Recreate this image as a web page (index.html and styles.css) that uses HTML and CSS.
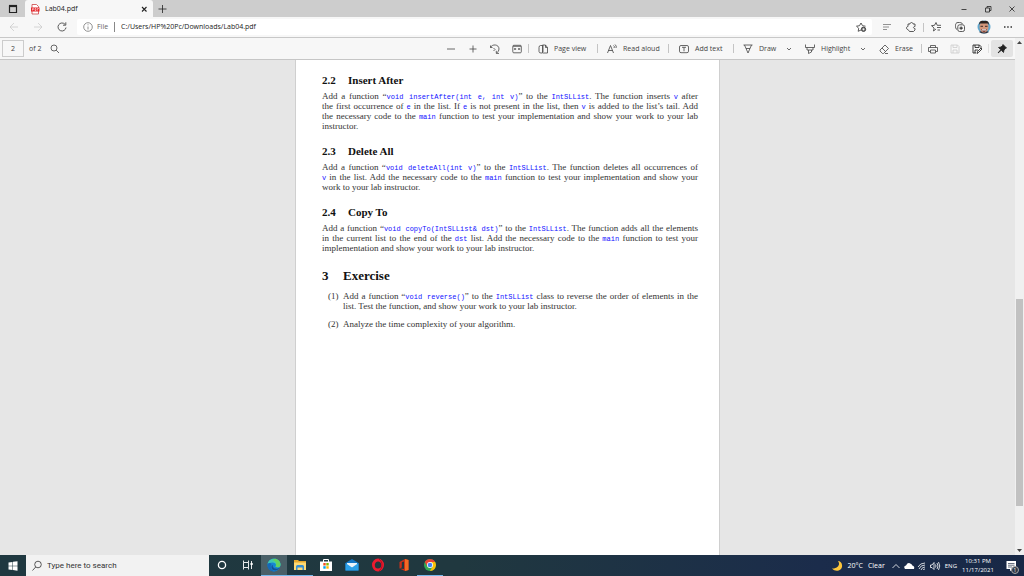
FILE: index.html
```html
<!DOCTYPE html>
<html lang="en">
<head>
<meta charset="utf-8">
<title>Lab04.pdf</title>
<link rel="stylesheet" href="styles.css">
</head>
<body>
<header class="tab-strip">
  <button class="tab-actions" aria-label="Tab actions"><svg class="icon" viewBox="0 0 12 12"><path d="M2.500 3h7v6.500h-7z" stroke-width="1.200"/><path d="M2 3h8" stroke-width="2.200"/></svg></button>
  <div class="tab">
    <svg class="icon" viewBox="0 0 12 12"><path d="M3 1.500h4.500l2 2V11H3z" fill="#fff" stroke="#c44"/><path d="M2 4.500h8.500v4H2z" fill="#e5252a" stroke="none"/><path d="M3.500 7.500v-2h1v1h-1M6 7.500v-2h1v2zM8.500 7.500v-2H10" stroke="#fff" stroke-width=".5"/></svg>
    <span class="tab-title">Lab04.pdf</span>
    <button class="tab-close" aria-label="Close tab"><svg class="icon" viewBox="0 0 12 12"><path d="M4 4l4.500 4.500M8.500 4L4 8.500" stroke-width="1.100"/></svg></button>
  </div>
  <button class="new-tab" aria-label="New tab"><svg class="icon" viewBox="0 0 12 12"><path d="M5.500 2v8M1.500 6h8"/></svg></button>
  <div class="window-controls">
    <button aria-label="Minimize"><svg class="icon" viewBox="0 0 12 12"><path d="M3.500 6.500h5"/></svg></button>
    <button aria-label="Restore"><svg class="icon" viewBox="0 0 12 12"><path d="M3.500 5h4v4h-4zM5 5V3.500h4v4H7.500"/></svg></button>
    <button aria-label="Close"><svg class="icon" viewBox="0 0 12 12"><path d="M3.500 3.500l5 5M8.500 3.500l-5 5"/></svg></button>
  </div>
</header>
<nav class="address-row" aria-label="Navigation">
  <div class="nav-buttons">
    <button class="faded" aria-label="Back"><svg class="icon" viewBox="0 0 12 12"><path d="M10 6H2M6 2L2 6l4 4"/></svg></button>
    <button class="faded" aria-label="Forward"><svg class="icon" viewBox="0 0 12 12"><path d="M2 6h8M6 2l4 4-4 4"/></svg></button>
    <button aria-label="Refresh"><svg class="icon" viewBox="0 0 12 12"><path d="M10 6.500A4 4 0 1 1 9 3.300M9.800 1.300v2.900H7"/></svg></button>
  </div>
  <div class="address">
    <svg class="icon muted" viewBox="0 0 12 12"><circle cx="6" cy="6" r="4.300"/><path d="M6 5.500v3M6 3.300v1"/></svg>
    <span class="scheme">File</span>
    <input class="url" aria-label="Address" value="C:/Users/HP%20Pc/Downloads/Lab04.pdf">
    <button class="favorite" aria-label="Add to favorites"><svg class="icon" viewBox="0 0 12 12"><path d="M6 9l-2.800 1.300.5-3L1.500 5.200l3-.5L6 2l1.500 2.700 3 .5"/><circle cx="8.500" cy="8.300" r="2.200" fill="#777"/><path d="M7.500 8.300h2M8.500 7.300v2" stroke="#fff" stroke-width=".7"/></svg></button>
  </div>
  <div class="browser-actions">
    <button aria-label="Immersive reader"><svg class="icon muted" viewBox="0 0 12 12"><path d="M2 3.500h8M2 6h6M2 8.500h4"/></svg></button>
    <button aria-label="Extensions"><svg class="icon" viewBox="0 0 12 12"><path d="M3 3h2c0-2 3-2 3 0h2v2.500c-2 0-2 2 0 2V9L8.500 10.500H4.500L3 8.500c-2 0-2-3 0-3z"/></svg></button>
    <i class="rule"></i>
    <button aria-label="Favorites"><svg class="icon" viewBox="0 0 12 12"><path d="M6 8L3.500 10l.6-3L1.500 4.700l3-.4L6 1.500l1.200 2.800H11M7 6.500h4M7.500 9H10"/></svg></button>
    <button aria-label="Collections"><svg class="icon" viewBox="0 0 12 12"><path d="M3 8.500C1.500 8 1.500 6 1.500 4.500s.5-3 2.500-3 4 0 4.500 1.500"/><rect x="3.800" y="3.800" width="6.700" height="6.700" rx="1.800"/><path d="M7.100 5.500v3.300M5.500 7.100h3.300" stroke-width="1.100"/></svg></button>
    <button aria-label="Profile"><svg class="avatar" viewBox="0 0 14 14"><circle cx="7" cy="7" r="6.500" fill="#61a8cf"/><path d="M2 12q5-3 10 0-5 3-10 0" fill="#29303e"/><ellipse cx="7" cy="7" rx="4.500" ry="5.500" fill="#d3977a"/><path d="M2 5Q2 0 7 1q5-1 5 4l-1-1.500H3z" fill="#29221f"/><path d="M3.500 6.300h2.500M8 6.300h2.500" stroke="#272020" stroke-width=".9"/><path d="M4 9h6q-1 3-3 3T4 9" fill="#682b28"/><path d="M4.800 9.300h4.400v1.200H4.800z" fill="#fff"/></svg></button>
    <button aria-label="Settings and more"><svg class="icon" viewBox="0 0 12 12"><path d="M2 6h1.500M5.200 6h1.500M8.500 6H10" stroke-width="1.500"/></svg></button>
  </div>
</nav>
<main class="viewer">
  <section class="pdf">
    <div class="pdf-toolbar" role="toolbar" aria-label="PDF tools">
      <div class="page-tools">
        <input class="page-number" aria-label="Page number" value="2">
        <span class="page-count">of 2</span>
        <button class="find" aria-label="Find"><svg class="icon" viewBox="0 0 12 12"><circle cx="5" cy="5" r="3"/><path d="M7.200 7.200L10 10"/></svg></button>
      </div>
      <div class="pdf-actions">
        <button class="tool" aria-label="Zoom out"><svg class="icon" viewBox="0 0 12 12"><path d="M2 6h8"/></svg></button>
        <button class="tool" aria-label="Zoom in"><svg class="icon" viewBox="0 0 12 12"><path d="M2.500 6h7M6 2.500v7"/></svg></button>
        <button class="tool" aria-label="Rotate"><svg class="icon" viewBox="0 0 12 12"><path d="M1.500 4.500C3 .8 10 1 10 6q0 2.800-2.500 4M7.300 7.800v2.600H10M1.500 2.500v2h2M4.500 5L6 6.500 4.500 8"/></svg></button>
        <button class="tool" aria-label="Fit to width"><svg class="icon" viewBox="0 0 12 12"><rect x="1.800" y="2.300" width="8.500" height="7.500" rx="1"/><path d="M3 6h2.200M7 6h2.200M4 5v2M8 5v2M2 3.300h8"/></svg></button>
        <i class="rule"></i>
        <button class="labelled page-view"><svg class="icon" viewBox="0 0 12 12"><path d="M5 2.500H3.500q-1.500 0-1.500 2v4Q2 10 4 10h1M5.500 2h3l2 2.500v5.500h-5zM8.500 2v2.500h2M6 2v7"/></svg>Page view</button>
        <i class="rule"></i>
        <button class="labelled read-aloud"><svg class="icon" viewBox="0 0 12 12"><path d="M1.500 10l3-7.500 3 7.500M2.500 7.500h4M7.500 2.500q1.500 1 .5 2.500M9 1.500q2 1.500 1 3.500"/></svg>Read aloud</button>
        <i class="rule"></i>
        <button class="labelled add-text"><svg class="icon" viewBox="0 0 12 12"><rect x="1.500" y="2.500" width="9" height="7.200" rx="1.500"/><path d="M4 4.300h4M6 4.300v4"/></svg>Add text</button>
        <i class="rule"></i>
        <button class="labelled draw"><svg class="icon" viewBox="0 0 12 12"><path d="M1.500 2h9M2.500 2L6 10l3.500-8M4 5.500h4"/></svg>Draw</button>
        <button class="chevron" aria-label="Draw options"><svg class="icon" viewBox="0 0 12 12"><path d="M4 5l2 2 2-2"/></svg></button>
        <button class="labelled highlight"><svg class="icon" viewBox="0 0 12 12"><path d="M1.500 1.500v3h9v-3M3 4.500V7h6V4.500M4.500 7v3.500l3-1.500V7"/></svg>Highlight</button>
        <button class="chevron" aria-label="Highlight options"><svg class="icon" viewBox="0 0 12 12"><path d="M4 5l2 2 2-2"/></svg></button>
        <button class="labelled erase"><svg class="icon" viewBox="0 0 12 12"><path d="M2 7l5-5 3.500 3.500-5 5H4.500L2 8zM4 5l3.500 3.500M7 10.500h3"/></svg>Erase</button>
        <i class="rule"></i>
        <button class="tool" aria-label="Print"><svg class="icon" viewBox="0 0 12 12"><path d="M3.500 4.500v-2h5v2M3 8.500H1.500v-4h9v4H9M3.500 7h5v3h-5z"/></svg></button>
        <button class="tool faded" aria-label="Save"><svg class="icon" viewBox="0 0 12 12"><path d="M2 2h6.500L10 3.500V10H2zM4 2v2.500h4V2M4 10V7h4v3"/></svg></button>
        <button class="tool" aria-label="Save as"><svg class="icon dark" viewBox="0 0 12 12"><path d="M5 10H2V2h6.500L10 3.500V5M4 2v2.500h4V2M4 10V7h3M6 10.500l.5-2L10 5l1 1-3.500 3.500z"/></svg></button>
        <i class="rule light"></i>
        <button class="pin" aria-label="Unpin toolbar"><svg class="icon" viewBox="0 0 12 12"><path d="M7 1.500l3.500 3.500-1 .5L8 7l-.5 2.500L5.300 7.300 2 10l2.700-3.300L2.500 4.500 5 4l1.500-1.500z" fill="#222" stroke="#222"/></svg></button>
      </div>
    </div>
    <div class="canvas">
      <article class="sheet">
        <h2><span class="num">2.2</span>Insert After</h2>
        <p><span class="line">Add a function “<code>void insertAfter(int e, int v)</code>” to the <code>IntSLList</code>. The function inserts <code>v</code> after</span>
        <span class="line">the first occurrence of <code>e</code> in the list. If <code>e</code> is not present in the list, then <code>v</code> is added to the list’s tail. Add</span>
        <span class="line">the necessary code to the <code>main</code> function to test your implementation and show your work to your lab</span>
        <span class="line last">instructor.</span></p>
        <h2><span class="num">2.3</span>Delete All</h2>
        <p><span class="line">Add a function “<code>void deleteAll(int v)</code>” to the <code>IntSLList</code>. The function deletes all occurrences of</span>
        <span class="line"><code>v</code> in the list. Add the necessary code to the <code>main</code> function to test your implementation and show your</span>
        <span class="line last">work to your lab instructor.</span></p>
        <h2><span class="num">2.4</span>Copy To</h2>
        <p><span class="line">Add a function “<code>void copyTo(IntSLList&amp; dst)</code>” to the <code>IntSLList</code>. The function adds all the elements</span>
        <span class="line">in the current list to the end of the <code>dst</code> list. Add the necessary code to the <code>main</code> function to test your</span>
        <span class="line last">implementation and show your work to your lab instructor.</span></p>
        <h1><span class="num">3</span>Exercise</h1>
        <ol>
          <li><span class="marker">(1)</span><div><span class="line">Add a function “<code>void reverse()</code>” to the <code>IntSLList</code> class to reverse the order of elements in the</span>
          <span class="line last">list. Test the function, and show your work to your lab instructor.</span></div></li>
          <li><span class="marker">(2)</span><div><span class="line last">Analyze the time complexity of your algorithm.</span></div></li>
        </ol>
      </article>
    </div>
  </section>
  <div class="scrollbar" aria-hidden="true">
    <svg class="arrow" viewBox="0 0 9 9"><path d="M2 6l2.500-3L7 6z"/></svg>
    <div class="track"><div class="thumb"></div></div>
    <svg class="arrow" viewBox="0 0 9 9"><path d="M2 3l2.500 3L7 3z"/></svg>
  </div>
</main>
<footer class="taskbar">
  <button class="start" aria-label="Start"><svg class="app-icon" viewBox="0 0 14 14"><path d="M2.500 3.500l4-.6v3.800h-4zM7 2.800l4.500-.6v4.500H7zM2.500 7.200h4V11l-4-.6zM7 7.200h4.500v4.500L7 11z" fill="#fff"/></svg></button>
  <label class="search"><svg class="icon" viewBox="0 0 12 12"><circle cx="7" cy="4.500" r="3.300"/><path d="M4.700 7L1.500 10.500"/></svg><input type="text" aria-label="Search" placeholder="Type here to search"></label>
  <div class="apps">
    <button aria-label="Cortana"><svg class="app-icon" viewBox="0 0 14 14"><circle cx="7" cy="7" r="3.600" fill="none" stroke="#fff" stroke-width="1.300"/></svg></button>
    <button aria-label="Task view"><svg class="app-icon" viewBox="0 0 14 14"><path d="M2.500 2.500v2h5v-2M2.500 11.500v-2h5v2M2.500 4.500v5M7.500 4.500v5M10.500 3v8" fill="none" stroke="#fff" stroke-width=".9"/><path d="M9.500 5h2.200v2H9.500z" fill="#fff"/></svg></button>
    <button class="open active" aria-label="Microsoft Edge"><svg class="app-icon" viewBox="0 0 14 14"><circle cx="7" cy="7" r="6.500" fill="#1686d2"/><path d="M.7 6C1.500-1 13-1 13.500 6.500c0 3-4 3.500-5 2 1.500-2-.5-4-3-4C3 4.500 1 5.500.7 6z" fill="#3ec7b2"/><path d="M8 .7c4 .5 6 4 5.300 7-1 2-3.800 2-4.800.8C10 6 9 3 5 2z" fill="#62d261"/><path d="M4.500 6c-2 3 0 7 4 7.300C3 14.500-.5 10 .7 6q2-2 3.800 0z" fill="#1569b8"/><path d="M5.700 6.800C5 10 9 12 12.500 9.800 10.500 14 3 13 4.700 7.500z" fill="#155096"/></svg></button>
    <button class="open" aria-label="File Explorer"><svg class="app-icon" viewBox="0 0 14 14"><path d="M1 2h4l1 1h7v9H1z" fill="#e8a92e"/><path d="M1 4.500h12V12H1z" fill="#ffda75"/><path d="M3 12V8.500q0-1.500 1.500-1.500h5Q11 7 11 8.500V12H9.500V9.500h-5V12z" fill="#368ed3"/></svg></button>
    <button aria-label="Microsoft Store"><svg class="app-icon" viewBox="0 0 14 14"><path d="M4.500 4V1.500h5V4" fill="none" stroke="#fff"/><path d="M1 3.500h12V13H1z" fill="#fff"/><path d="M4.300 5h2.400v2.500H4.300z" fill="#f05022"/><path d="M7.300 5h2.400v2.500H7.300z" fill="#7fb900"/><path d="M4.300 8.200h2.400v2.500H4.300z" fill="#00a4ef"/><path d="M7.300 8.200h2.400v2.500H7.300z" fill="#ffb900"/></svg></button>
    <button aria-label="Mail"><svg class="app-icon" viewBox="0 0 14 14"><path d="M.5 5L7 1l6.500 4v7.500H.5z" fill="#1377c6"/><path d="M2 5h10v3L7 10 2 8z" fill="#eaf4fb"/><path d="M.5 5L7 9.500 13.500 5v7.500H.5z" fill="#2ba0e8"/></svg></button>
    <button aria-label="Opera"><svg class="app-icon" viewBox="0 0 14 14"><ellipse cx="7" cy="7" rx="4.600" ry="5" fill="none" stroke="#ed1b2f" stroke-width="2.800"/><path d="M8 1.200c4 2 4 9.500 0 11.600" fill="none" stroke="#b70d20"/></svg></button>
    <button aria-label="Office"><svg class="app-icon" viewBox="0 0 14 14"><path d="M2.500 4L8 1l3.500 1v10L8 13l-5.500-2.500 4.500.5V3.500L4.800 4.200v5.300l-2.300 1z" fill="#c9301a"/><path d="M8 1l3.500 1v10L8 13z" fill="#f36a24"/></svg></button>
    <button class="open" aria-label="Google Chrome"><svg class="app-icon" viewBox="0 0 14 14"><circle cx="7" cy="7" r="6" fill="#34a853"/><path d="M1.800 4A6 6 0 0 1 12.200 4H7L4.400 8.500z" fill="#ea4335"/><path d="M7 4h5.200A6 6 0 0 1 7 13l2.600-4.500z" fill="#fbbc05"/><circle cx="7" cy="7" r="3" fill="#fff"/><circle cx="7" cy="7" r="2.300" fill="#4285f4"/></svg></button>
  </div>
  <div class="tray">
    <div class="weather"><svg class="icon" viewBox="0 0 12 12"><path d="M7 1c3 4-1 8-6 7.500C5 13 12 10 11 5c0-2-2-4-4-4z" fill="#fcc53b" stroke="none"/></svg><span>20°C</span><span>Clear</span></div>
    <div class="status">
      <svg class="icon" viewBox="0 0 12 12"><path d="M2.500 8L6 4.500 9.500 8"/></svg>
      <svg class="icon" viewBox="0 0 12 12"><path d="M2 9q-2-3 1-3.500Q5 1.500 8 4q1 0 1.300 1.500Q12 6 11 9z" fill="#fff" stroke="none"/></svg>
      <svg class="icon" viewBox="0 0 12 12"><path d="M2 7q2-4 7-4M3 9q1.500-4 6-4M5 10q1-3 4-3M7 10q.5-1 2-1"/></svg>
      <svg class="icon" viewBox="0 0 12 12"><path d="M1.500 5v2.500H3L5 9.500v-7L3 5zM6.500 4.500q1 1.500 0 3M8 3q2 3 0 6M9.500 2q2.500 4 0 8"/></svg>
      <span class="language">ENG</span>
    </div>
    <time class="clock" datetime="2021-11-17T22:31"><span>10:31 PM</span><span>11/17/2021</span></time>
    <button class="notifications" aria-label="1 notification"><svg class="app-icon" viewBox="0 0 14 14"><path d="M1.500 2h9.500v8H7.500L5 12.300V10H1.500z" fill="#fff"/><path d="M3 4.500h6.500M3 6.200h6.500M3 8h4" stroke="#26334b" stroke-width=".7"/></svg><span class="badge">1</span></button>
  </div>
</footer>
</body>
</html>
```
FILE: styles.css
```css
* { box-sizing: border-box; }

body {
  margin: 0;
  height: 100vh;
  display: flex;
  flex-direction: column;
  overflow: hidden;
  background: #e6e6e6;
  color: #333;
  font: 7px/10px "Open Sans", "Noto Sans", sans-serif;
}

button, input {
  margin: 0;
  padding: 0;
  border: 0;
  background: none;
  color: inherit;
  font: inherit;
}

button {
  display: flex;
  align-items: center;
  justify-content: center;
  flex: none;
}

svg { display: block; flex: none; }

.icon {
  width: 12px;
  height: 12px;
  fill: none;
  stroke: currentColor;
  stroke-width: 0.8;
}

.app-icon, .avatar { width: 14px; height: 14px; }
.faded { color: #ccc; }
.muted { color: #777; }
.dark { color: #111; }
.rule { flex: none; width: 1px; height: 9px; background: #c4c4c4; }
.light { background: #e0e0e0; }

/* Tabs */
.tab-strip { display: flex; flex: none; height: 17px; background: #cdcdcd; color: #222; }
.tab-actions { width: 25px; }
.tab {
  display: flex;
  align-items: center;
  width: 128px;
  padding: 0 3px 0 4px;
  gap: 4px;
  border-radius: 3px 3px 0 0;
  background: #f7f7f7;
}
.tab-title { flex: 1; }
.new-tab { width: 19px; }
.window-controls { display: flex; margin-left: auto; }
.window-controls button { width: 24px; }

/* Address bar */
.address-row {
  display: flex;
  align-items: center;
  flex: none;
  height: 21px;
  border-bottom: 1px solid #c8c8c8;
  background: #f7f7f7;
}
.nav-buttons { display: flex; padding: 0 3px 0 2px; }
.nav-buttons button { width: 24px; }
.address {
  display: flex;
  align-items: center;
  flex: 1;
  height: 16px;
  padding: 0 5px;
  border-radius: 2px;
  background: #fff;
}
.scheme { margin-left: 3px; padding-right: 6px; border-right: 1px solid #888; color: #666; }
.url { flex: 1; min-width: 0; margin-left: 6px; color: #222; }
.browser-actions { display: flex; align-items: center; padding: 0 4px 0 3px; }
.browser-actions button { width: 24px; }

/* PDF viewer */
.viewer { display: flex; flex: 1; min-height: 0; }
.pdf { display: flex; flex: 1; flex-direction: column; min-width: 0; }
.pdf-toolbar {
  display: flex;
  align-items: center;
  justify-content: space-between;
  flex: none;
  height: 22px;
  padding: 0 2px;
  border-bottom: 1px solid #c6c6c6;
  background: #f7f7f7;
  color: #444;
}
.page-tools, .pdf-actions { display: flex; align-items: center; }
.page-number { width: 22px; height: 17px; border: 1px solid #ccc; text-align: center; }
.page-count { margin-left: 5px; }
.find { margin-left: 8px; }
.tool { width: 22px; }
.labelled { justify-content: flex-start; gap: 5px; padding-left: 8px; }
.page-view { width: 68px; }
.read-aloud { width: 70px; }
.add-text { width: 64px; padding-left: 9px; }
.draw { width: 48px; }
.chevron { width: 14px; }
.highlight { width: 60px; }
.erase { width: 51px; }
.pin { width: 22px; height: 17px; margin-left: 2px; border-radius: 2px; background: #e3e3e3; }

.canvas { display: flex; flex: 1; justify-content: center; min-height: 0; background: #e6e6e6; }
.sheet {
  width: 425px;
  padding: 13px 21px 0 26px;
  border: solid #cfcfcf;
  border-width: 0 1px;
  background: #fff;
  color: #333;
  font: 9px/10px "Liberation Serif", serif;
}
.sheet h1, .sheet h2 { margin: 0; color: #111; font-weight: 700; }
.sheet h2 { font-size: 11px; line-height: 14px; }
.sheet h1 { margin-bottom: 7px; font-size: 13px; line-height: 16px; }
.sheet h2 .num { display: inline-block; width: 26px; }
.sheet h1 .num { display: inline-block; width: 21px; }
.sheet p { margin: 4px 0 13px; }
.sheet p:last-of-type { margin-bottom: 15px; }
.line { display: block; white-space: nowrap; text-align-last: justify; }
.last { text-align-last: left; }
.sheet code { color: #11f; font: 7px/1px "Liberation Mono", monospace; }
.sheet ol { margin: 0; padding: 0; list-style: none; }
.sheet li { display: flex; margin-bottom: 8px; }
.marker { width: 21px; padding-left: 6px; flex: none; }
.sheet li div { flex: 1; }

.scrollbar { display: flex; flex: none; flex-direction: column; width: 9px; background: #f0f0f0; }
.arrow { width: 9px; height: 9px; fill: #444; }
.track { display: flex; flex: 1; flex-direction: column; justify-content: flex-end; padding: 0 1px 40px; }
.thumb { height: 45%; background: #c1c1c1; }

/* Taskbar */
.taskbar {
  display: flex;
  flex: none;
  height: 21px;
  background: linear-gradient(90deg, #1f3840, #20383f 45%, #1b2c4b 80%, #182846);
  color: #fff;
}
.start { width: 26px; }
.search {
  display: flex;
  align-items: center;
  width: 183px;
  gap: 4px;
  padding-left: 5px;
  background: #f2f2f2;
  color: #333;
}
.search input { flex: 1; min-width: 0; font: 8px/10px Roboto, sans-serif; }
.search input::placeholder { color: #333; opacity: 1; }
.apps { display: flex; }
.apps button { width: 26px; border-bottom: 1px solid transparent; }
.apps .open { border-color: #76b9ed; }
.apps .active { background: #4a6068; }
.tray { display: flex; align-items: center; margin-left: auto; }
.weather { display: flex; align-items: center; gap: 5px; }
.status { display: flex; align-items: center; gap: 1px; margin-left: 5px; }
.language { margin-left: 3px; font-size: 6px; }
.clock { display: flex; flex-direction: column; align-items: center; width: 42px; font-size: 6px; line-height: 9px; }
.notifications { position: relative; width: 25px; height: 21px; }
.badge {
  position: absolute;
  right: 5px;
  bottom: 2px;
  width: 8px;
  height: 8px;
  border: 1px solid #aaa;
  border-radius: 50%;
  background: #303846;
  font-size: 5px;
  line-height: 6px;
  text-align: center;
}
```
